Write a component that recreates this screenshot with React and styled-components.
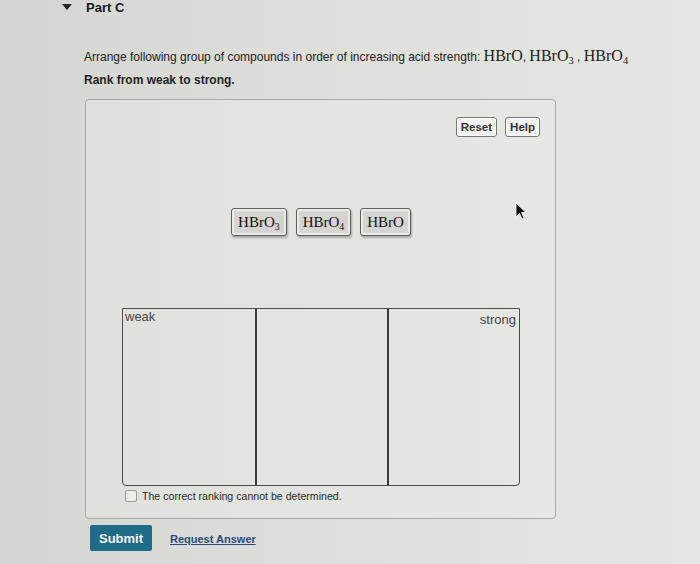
import React, { useState } from 'react';
import styled, { createGlobalStyle } from 'styled-components';

const GlobalStyle = createGlobalStyle`
  html, body {
    margin: 0;
    padding: 0;
  }
  body {
    width: 700px;
    height: 564px;
    overflow: hidden;
    background: linear-gradient(90deg, #d5d5d1 0%, #dededa 45%, #e6e6e2 100%);
    font-family: 'Liberation Sans', Arial, sans-serif;
    color: #1f1f1f;
  }
`;

const Page = styled.div`
  position: relative;
  width: 700px;
  height: 564px;
`;

const PartHeader = styled.div`
  display: flex;
  align-items: center;
  height: 14px;
  padding-left: 62px;
  gap: 14px;
  font-size: 13px;
  font-weight: 600;
  color: #1a1a1a;
`;

const Caret = styled.span`
  width: 0;
  height: 0;
  border-left: 5px solid transparent;
  border-right: 5px solid transparent;
  border-top: 6px solid #222;
`;

const Content = styled.div`
  padding: 34px 0 0 84px;
`;

const Prompt = styled.p`
  margin: 0;
  font-size: 12px;
  line-height: 16px;
  color: #222;
`;

const Formula = styled.span`
  font-family: 'Liberation Serif', 'Times New Roman', serif;
  font-size: ${p => p.$size || 15}px;
  sub {
    font-size: 0.66em;
    vertical-align: -3px;
    line-height: 0;
  }
`;

const Instruction = styled.p`
  margin: 7px 0 0;
  font-size: 12px;
  line-height: 16px;
  font-weight: 700;
`;

const Panel = styled.div`
  position: relative;
  box-sizing: border-box;
  margin: 11px 0 0 1px;
  width: 471px;
  height: 420px;
  border: 1px solid #a9a9a5;
  border-radius: 4px;
  background: rgba(236, 236, 232, 0.45);
  padding: 17px 15px 0 36px;
  display: flex;
  flex-direction: column;
`;

const Toolbar = styled.div`
  display: flex;
  justify-content: flex-end;
  gap: 8px;
`;

const ToolButton = styled.button`
  font-family: 'Liberation Sans', Arial, sans-serif;
  font-size: 11.5px;
  font-weight: 700;
  color: #333;
  height: 20px;
  padding: 0 4px;
  border: 1px solid #777;
  border-radius: 3px;
  background: #f2f2f0;
  box-shadow: inset 0 0 0 1px #fff;
  cursor: pointer;
`;

const ChipRow = styled.div`
  display: flex;
  justify-content: center;
  gap: 9px;
  margin: 71px 0 0 -20px;
`;

const Chip = styled.div`
  box-sizing: border-box;
  height: 28px;
  padding: 0 6px;
  display: flex;
  align-items: center;
  border: 1px solid #5e5e5e;
  border-radius: 3px;
  background: #d4d4d0;
  box-shadow: inset 0 0 0 2px #ebebe8, 1px 2px 2px rgba(0, 0, 0, 0.25);
  color: #111;
`;

const RankBox = styled.div`
  box-sizing: border-box;
  margin-top: 72px;
  width: 398px;
  height: 178px;
  display: grid;
  grid-template-columns: 1fr 1fr 1fr;
  border: 1px solid #4a4a4a;
  border-radius: 0 0 4px 4px;
`;

const Slot = styled.div`
  border-left: ${p => (p.$first ? 'none' : '2px solid #3a3a3a')};
  display: flex;
  justify-content: ${p => (p.$right ? 'flex-end' : 'flex-start')};
  align-items: flex-start;
  padding: ${p => (p.$right ? '3px 3px 0 0' : '0 0 0 2px')};
  font-size: 13px;
  color: #444;
`;

const CheckRow = styled.label`
  display: flex;
  align-items: center;
  gap: 5px;
  margin: 4px 0 0 3px;
  font-size: 10.6px;
  color: #2a2a2a;
`;

const CheckBox = styled.span`
  box-sizing: border-box;
  width: 12px;
  height: 12px;
  border: 1px solid #9a9a96;
  border-radius: 2px;
  background: #ecece9;
`;

const Actions = styled.div`
  display: flex;
  align-items: center;
  gap: 18px;
  margin: 6px 0 0 6px;
`;

const SubmitButton = styled.button`
  font-family: 'Liberation Sans', Arial, sans-serif;
  height: 26px;
  width: 62px;
  border: none;
  border-radius: 2px;
  background: #1f6c88;
  color: #f4f8fa;
  font-size: 13px;
  font-weight: 700;
  cursor: pointer;
`;

const RequestLink = styled.a`
  font-size: 11px;
  font-weight: 700;
  color: #274c77;
  text-decoration: underline;
  margin-top: 1px;
`;

const Pointer = styled.svg`
  position: absolute;
  left: 514px;
  top: 201px;
`;

const Br = ({ n, size }) => (
  <Formula $size={size}>
    HBrO{n && <sub>{n}</sub>}
  </Formula>
);

export default function App() {
  const [checked, setChecked] = useState(false);
  return (
    <Page>
      <GlobalStyle />
      <PartHeader>
        <Caret />
        Part C
      </PartHeader>
      <Content>
        <Prompt>
          Arrange following group of compounds in order of increasing acid strength:{' '}
          <Br size={16} />, <Br size={16} n="3" /> , <Br size={16} n="4" />
        </Prompt>
        <Instruction>Rank from weak to strong.</Instruction>
        <Panel>
          <Toolbar>
            <ToolButton>Reset</ToolButton>
            <ToolButton>Help</ToolButton>
          </Toolbar>
          <ChipRow>
            <Chip><Br n="3" /></Chip>
            <Chip><Br n="4" /></Chip>
            <Chip><Br /></Chip>
          </ChipRow>
          <RankBox>
            <Slot $first>weak</Slot>
            <Slot />
            <Slot $right>strong</Slot>
          </RankBox>
          <CheckRow onClick={() => setChecked(!checked)}>
            <CheckBox />
            The correct ranking cannot be determined.
          </CheckRow>
        </Panel>
        <Actions>
          <SubmitButton>Submit</SubmitButton>
          <RequestLink>Request Answer</RequestLink>
        </Actions>
      </Content>
      <Pointer width="14" height="20" viewBox="0 0 14 20">
        <path d="M2 2 L2 16 L5.5 12.5 L8 18 L10 17 L7.5 11.5 L12 11.5 Z" fill="#111" stroke="#fff" strokeWidth="0.8" />
      </Pointer>
    </Page>
  );
}
